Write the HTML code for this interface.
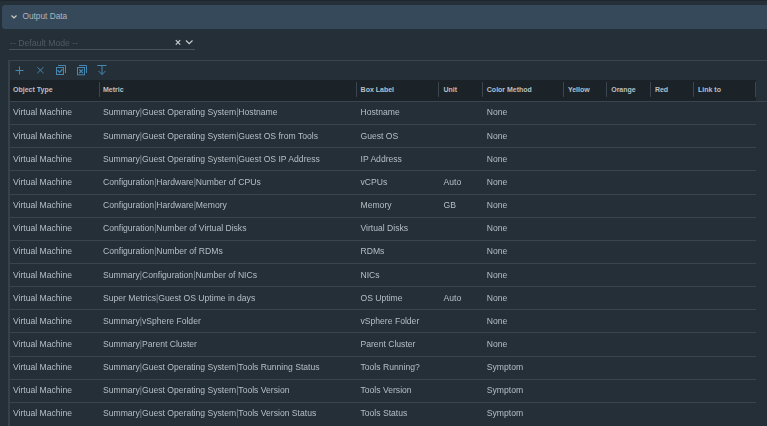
<!DOCTYPE html><html><head><meta charset="utf-8"><style>
html,body{margin:0;padding:0;width:767px;height:426px;overflow:hidden;background:#242f38;font-family:"Liberation Sans",sans-serif;}
.a{position:absolute;white-space:nowrap}
i{font-style:normal;display:inline-block;opacity:0.65}
.t{position:absolute;white-space:nowrap;font-size:8.6px;color:#b8bfc5;line-height:10px}
.h{position:absolute;white-space:nowrap;font-size:7.0px;font-weight:bold;color:#b9c0c5;line-height:10px}
</style></head><body><div style="position:absolute;left:0;top:0;width:767px;height:426px;filter:blur(0.35px)">
<div class="a" style="left:0;top:0;width:767px;height:1px;background:#1e252c"></div>
<div class="a" style="left:2px;top:5px;width:780px;height:24px;border-radius:3px;background:#35495b"></div>
<svg class="a" style="left:10px;top:14px" width="8" height="6" viewBox="0 0 8 6"><path d="M1.5 1.5 L4 4 L6.5 1.5" fill="none" stroke="#d0ccc4" stroke-width="1.2"/></svg>
<div class="a" style="left:22.5px;top:11px;font-size:8.3px;line-height:10px;color:#adb5bc">Output Data</div>
<div class="a" style="left:10px;top:37.5px;font-size:8.7px;line-height:10px;color:#505a64">-- Default Mode --</div>
<div class="a" style="left:9px;top:49px;width:186px;height:1px;background:#47525d"></div>
<svg class="a" style="left:174px;top:39px" width="8" height="7" viewBox="0 0 8 7"><path d="M1.8 1.2 L6.2 5.6 M6.2 1.2 L1.8 5.6" fill="none" stroke="#c9cdd1" stroke-width="1.2"/></svg>
<svg class="a" style="left:185px;top:39px" width="9" height="7" viewBox="0 0 9 7"><path d="M1 1.5 L4.2 4.6 L7.5 1.5" fill="none" stroke="#c9cdd1" stroke-width="1.2"/></svg>
<div class="a" style="left:8px;top:60px;width:800px;height:1px;background:#3a4550"></div>
<div class="a" style="left:8px;top:60px;width:2px;height:380px;background:#36414c"></div>
<svg class="a" style="left:0;top:0" width="767" height="426">
<g fill="none" stroke="#4787b0" stroke-width="1">
<path d="M15.5 70.5 H23.5 M19.5 66.5 V74.5"/>
<path d="M37.3 67.2 L43.5 73.2 M43.5 67.2 L37.3 73.2"/>
<rect x="56.5" y="67.5" width="7" height="7"/>
<path d="M58 65.5 H65.5 V73"/>
<path d="M57.6 70.3 L59.6 72.4 L62.4 69.2" stroke-width="1.3"/>
<rect x="77.5" y="67.5" width="7" height="7.3"/>
<path d="M79 65.5 H86.5 V73"/>
<path d="M79.3 69.5 L82.8 73 M82.8 69.5 L79.3 73" stroke-width="1.2"/>
<path d="M97.3 65.5 H106.5 M102 65.5 V74.5 M98.5 71 L102 74.5 L105.5 71"/>
</g></svg>
<div class="a" style="left:10px;top:80px;width:746px;height:21px;background:#1b2329"></div>
<div class="a" style="left:10px;top:101px;width:757px;height:1px;background:#3a4550"></div>

<div class="a" style="left:99px;top:82px;width:1px;height:15px;background:#3b4651"></div>
<div class="a" style="left:356px;top:82px;width:1px;height:15px;background:#3b4651"></div>
<div class="a" style="left:438px;top:82px;width:1px;height:15px;background:#3b4651"></div>
<div class="a" style="left:482px;top:82px;width:1px;height:15px;background:#3b4651"></div>
<div class="a" style="left:563px;top:82px;width:1px;height:15px;background:#3b4651"></div>
<div class="a" style="left:606px;top:82px;width:1px;height:15px;background:#3b4651"></div>
<div class="a" style="left:650px;top:82px;width:1px;height:15px;background:#3b4651"></div>
<div class="a" style="left:693px;top:82px;width:1px;height:15px;background:#3b4651"></div>
<div class="a" style="left:755px;top:82px;width:1px;height:15px;background:#3b4651"></div>
<div class="h" style="left:13px;top:84.7px">Object Type</div>
<div class="h" style="left:103px;top:84.7px">Metric</div>
<div class="h" style="left:360.6px;top:84.7px">Box Label</div>
<div class="h" style="left:443.5px;top:84.7px">Unit</div>
<div class="h" style="left:486.8px;top:84.7px">Color Method</div>
<div class="h" style="left:567.9px;top:84.7px">Yellow</div>
<div class="h" style="left:611.2px;top:84.7px">Orange</div>
<div class="h" style="left:654.9px;top:84.7px">Red</div>
<div class="h" style="left:698px;top:84.7px">Link to</div>
<div class="t" style="left:13px;top:107.45px">Virtual Machine</div>
<div class="t" style="left:103px;top:107.45px">Summary<i>|</i>Guest Operating System<i>|</i>Hostname</div>
<div class="t" style="left:360.5px;top:107.45px">Hostname</div>
<div class="t" style="left:486.8px;top:107.45px">None</div>
<div class="a" style="left:10px;top:124px;width:746px;height:1px;background:#3a4550"></div>
<div class="t" style="left:13px;top:130.60px">Virtual Machine</div>
<div class="t" style="left:103px;top:130.60px">Summary<i>|</i>Guest Operating System<i>|</i>Guest OS from Tools</div>
<div class="t" style="left:360.5px;top:130.60px">Guest OS</div>
<div class="t" style="left:486.8px;top:130.60px">None</div>
<div class="a" style="left:10px;top:147px;width:746px;height:1px;background:#3a4550"></div>
<div class="t" style="left:13px;top:153.75px">Virtual Machine</div>
<div class="t" style="left:103px;top:153.75px">Summary<i>|</i>Guest Operating System<i>|</i>Guest OS IP Address</div>
<div class="t" style="left:360.5px;top:153.75px">IP Address</div>
<div class="t" style="left:486.8px;top:153.75px">None</div>
<div class="a" style="left:10px;top:170px;width:746px;height:1px;background:#3a4550"></div>
<div class="t" style="left:13px;top:176.90px">Virtual Machine</div>
<div class="t" style="left:103px;top:176.90px">Configuration<i>|</i>Hardware<i>|</i>Number of CPUs</div>
<div class="t" style="left:360.5px;top:176.90px">vCPUs</div>
<div class="t" style="left:443.5px;top:176.90px">Auto</div>
<div class="t" style="left:486.8px;top:176.90px">None</div>
<div class="a" style="left:10px;top:194px;width:746px;height:1px;background:#3a4550"></div>
<div class="t" style="left:13px;top:200.05px">Virtual Machine</div>
<div class="t" style="left:103px;top:200.05px">Configuration<i>|</i>Hardware<i>|</i>Memory</div>
<div class="t" style="left:360.5px;top:200.05px">Memory</div>
<div class="t" style="left:443.5px;top:200.05px">GB</div>
<div class="t" style="left:486.8px;top:200.05px">None</div>
<div class="a" style="left:10px;top:217px;width:746px;height:1px;background:#3a4550"></div>
<div class="t" style="left:13px;top:223.20px">Virtual Machine</div>
<div class="t" style="left:103px;top:223.20px">Configuration<i>|</i>Number of Virtual Disks</div>
<div class="t" style="left:360.5px;top:223.20px">Virtual Disks</div>
<div class="t" style="left:486.8px;top:223.20px">None</div>
<div class="a" style="left:10px;top:240px;width:746px;height:1px;background:#3a4550"></div>
<div class="t" style="left:13px;top:246.35px">Virtual Machine</div>
<div class="t" style="left:103px;top:246.35px">Configuration<i>|</i>Number of RDMs</div>
<div class="t" style="left:360.5px;top:246.35px">RDMs</div>
<div class="t" style="left:486.8px;top:246.35px">None</div>
<div class="a" style="left:10px;top:263px;width:746px;height:1px;background:#3a4550"></div>
<div class="t" style="left:13px;top:269.50px">Virtual Machine</div>
<div class="t" style="left:103px;top:269.50px">Summary<i>|</i>Configuration<i>|</i>Number of NICs</div>
<div class="t" style="left:360.5px;top:269.50px">NICs</div>
<div class="t" style="left:486.8px;top:269.50px">None</div>
<div class="a" style="left:10px;top:286px;width:746px;height:1px;background:#3a4550"></div>
<div class="t" style="left:13px;top:292.65px">Virtual Machine</div>
<div class="t" style="left:103px;top:292.65px">Super Metrics<i>|</i>Guest OS Uptime in days</div>
<div class="t" style="left:360.5px;top:292.65px">OS Uptime</div>
<div class="t" style="left:443.5px;top:292.65px">Auto</div>
<div class="t" style="left:486.8px;top:292.65px">None</div>
<div class="a" style="left:10px;top:309px;width:746px;height:1px;background:#3a4550"></div>
<div class="t" style="left:13px;top:315.80px">Virtual Machine</div>
<div class="t" style="left:103px;top:315.80px">Summary<i>|</i>vSphere Folder</div>
<div class="t" style="left:360.5px;top:315.80px">vSphere Folder</div>
<div class="t" style="left:486.8px;top:315.80px">None</div>
<div class="a" style="left:10px;top:332px;width:746px;height:1px;background:#3a4550"></div>
<div class="t" style="left:13px;top:338.95px">Virtual Machine</div>
<div class="t" style="left:103px;top:338.95px">Summary<i>|</i>Parent Cluster</div>
<div class="t" style="left:360.5px;top:338.95px">Parent Cluster</div>
<div class="t" style="left:486.8px;top:338.95px">None</div>
<div class="a" style="left:10px;top:356px;width:746px;height:1px;background:#3a4550"></div>
<div class="t" style="left:13px;top:362.10px">Virtual Machine</div>
<div class="t" style="left:103px;top:362.10px">Summary<i>|</i>Guest Operating System<i>|</i>Tools Running Status</div>
<div class="t" style="left:360.5px;top:362.10px">Tools Running?</div>
<div class="t" style="left:486.8px;top:362.10px">Symptom</div>
<div class="a" style="left:10px;top:379px;width:746px;height:1px;background:#3a4550"></div>
<div class="t" style="left:13px;top:385.25px">Virtual Machine</div>
<div class="t" style="left:103px;top:385.25px">Summary<i>|</i>Guest Operating System<i>|</i>Tools Version</div>
<div class="t" style="left:360.5px;top:385.25px">Tools Version</div>
<div class="t" style="left:486.8px;top:385.25px">Symptom</div>
<div class="a" style="left:10px;top:402px;width:746px;height:1px;background:#3a4550"></div>
<div class="t" style="left:13px;top:408.40px">Virtual Machine</div>
<div class="t" style="left:103px;top:408.40px">Summary<i>|</i>Guest Operating System<i>|</i>Tools Version Status</div>
<div class="t" style="left:360.5px;top:408.40px">Tools Status</div>
<div class="t" style="left:486.8px;top:408.40px">Symptom</div>
</div></body></html>
